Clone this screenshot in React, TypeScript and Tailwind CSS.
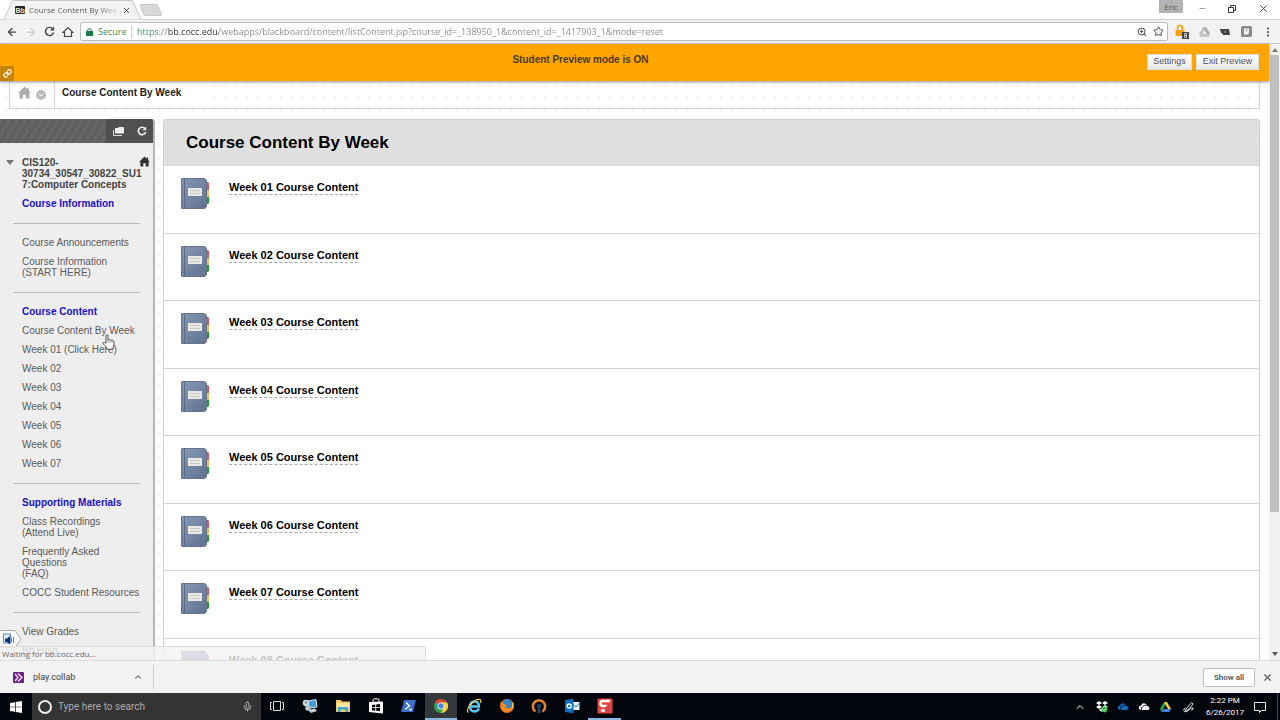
import { ReactNode } from 'react';
import {
  ArrowLeft, ArrowRight, ChevronDown, ChevronUp, Link, Mic, Minus,
  MoreVertical, Star, X, ZoomIn,
} from 'lucide-react';

const uiFont = "font-['Open_Sans','Noto_Sans',sans-serif]";

const weeks = ['01', '02', '03', '04', '05', '06', '07', '08'];

type MenuSection = { heading?: string; items: string[][] };

const menu: MenuSection[] = [
  { items: [['Course Announcements'], ['Course Information', '(START HERE)']] },
  {
    heading: 'Course Content',
    items: [
      ['Course Content By Week'], ['Week 01 (Click Here)'], ['Week 02'], ['Week 03'],
      ['Week 04'], ['Week 05'], ['Week 06'], ['Week 07'],
    ],
  },
  {
    heading: 'Supporting Materials',
    items: [
      ['Class Recordings', '(Attend Live)'],
      ['Frequently Asked', 'Questions', '(FAQ)'],
      ['COCC Student Resources'],
    ],
  },
  { items: [['View Grades'], ['Bb Help']] },
];

const House = ({ size, color }: { size: number; color: string }) => (
  <svg width={size} height={size} viewBox="0 0 12 12" className="shrink-0">
    <path d="M6 .5L8.500 3V1.500H10V4.500L12 6.500H10.500V11.500H7.300V8H4.700V11.500H1.500V6.500H0Z" fill={color} />
  </svg>
);

const ReloadIcon = ({ size, color, weight }: { size: number; color: string; weight: number }) => (
  <svg width={size} height={size} viewBox="0 0 12 12" className="shrink-0">
    <path d="M9.500 3A4.500 4.500 0 1 0 10.500 7" fill="none" stroke={color} strokeWidth={weight} />
    <path d="M11 .5V5H6.500Z" fill={color} />
  </svg>
);

const TabStrip = () => (
  <div className="relative flex h-5 shrink-0 items-start justify-between border-b border-[#d0d0d0] bg-white">
    <div className="flex">
      <div className="relative ml-1 flex h-5 w-[137px] items-center pl-[11px]">
        <svg className="absolute inset-0" width="137" height="20" viewBox="0 0 137 20">
          <path d="M0 19.500 L8 1.500 Q9 .5 10 .5 H127 Q128.500 .5 129 2 L137 19.500" fill="#f2f2f2" stroke="#c4c4c4" />
        </svg>
        <svg className="relative" width="10" height="8" viewBox="0 0 10 8">
          <rect width="10" height="8" rx="1" fill="#222" />
          <text x="0.5" y="6.500" fontSize="7" fontWeight="700" fill="#f3edc4" fontFamily="Liberation Sans, sans-serif">Bb</text>
        </svg>
        <span className="relative ml-1 w-[88px] whitespace-nowrap bg-gradient-to-r from-[#555] from-80% to-[#ddd] bg-clip-text text-[8px] text-transparent">
          Course Content By Week
        </span>
        <button aria-label="Close tab" className="relative ml-[5px]"><X size={9} strokeWidth={2.500} color="#444" /></button>
      </div>
      <button aria-label="New tab" className="-ml-0.5 mt-1 self-start">
        <svg width="24" height="12" viewBox="0 0 24 12">
          <path d="M1 1 Q1 .5 2 .5 H17 Q18.500 .5 19 2 L22.500 10 Q22.500 11.500 21 11.500 H7 Q5 11.500 4.500 10 Z" fill="#d8d8d8" stroke="#c8c8c8" />
        </svg>
      </button>
    </div>
    <div className="flex items-center pr-[11px]">
      <button className="mr-[15px] h-[13px] w-6 self-start bg-[#b3b3b3] text-[8px] leading-[12px] text-[#555]">Eric</button>
      <button aria-label="Minimize" className="mr-[20px] mt-[3px]"><Minus size={9} color="#888" /></button>
      <button aria-label="Restore" className="mr-[21px] mt-[3px]">
        <svg width="10" height="10" viewBox="0 0 10 10" fill="none" stroke="#333">
          <path d="M1.500 3.500 H6.500 V8.500 H1.500 Z M3.500 3 V1.500 H8.500 V6.500 H7" />
        </svg>
      </button>
      <button aria-label="Close" className="mt-[3px]"><X size={11} strokeWidth={2} color="#333" /></button>
    </div>
  </div>
);

const Toolbar = () => (
  <div className="flex h-6 shrink-0 items-center border-b border-[#c9c9c9] bg-[#f2f2f2] pl-1.5 pr-1.5">
    <div className="flex w-[74px] shrink-0 items-center gap-[7px] text-[#444]">
      <button aria-label="Back"><ArrowLeft size={12} strokeWidth={2.500} /></button>
      <button aria-label="Forward"><ArrowRight size={12} strokeWidth={2.500} color="#ccc" /></button>
      <button aria-label="Reload"><ReloadIcon size={11} color="#444" weight={1.5} /></button>
      <button aria-label="Home">
        <svg width="12" height="12" viewBox="0 0 12 12"><path d="M1 6.500L6 1.500L11 6.500H9.500V10.500H2.500V6.500Z" fill="none" stroke="#444" strokeWidth="1.200" /></svg>
      </button>
    </div>
    <div className="flex h-[19px] min-w-0 flex-1 items-center rounded-[2px] border border-[#bdbdbd] bg-white pl-[5px] pr-[3px]">
      <svg width="7" height="8" viewBox="0 0 7 8"><rect y="3" width="7" height="5" rx=".5" fill="#1a7a43" /><path d="M1.700 3.500V2.200Q1.700 .8 3.500 .8T5.300 2.200V3.500" fill="none" stroke="#1a7a43" /></svg>
      <label htmlFor="url" className="ml-[5px] w-[34px] border-r border-[#ccc] text-[9px] leading-[12px] text-[#3d9159]">Secure</label>
      <input
        id="url"
        className="ml-[5px] min-w-0 flex-1 bg-[linear-gradient(to_right,#3d9159_0_23px,#888_23px_31px,#333_31px_82px,#888_82px)] bg-clip-text text-[9px] text-transparent outline-none"
        defaultValue="https://bb.cocc.edu/webapps/blackboard/content/listContent.jsp?course_id=_138950_1&content_id=_1417903_1&mode=reset"
      />
      <button aria-label="Zoom"><ZoomIn size={10} strokeWidth={2.500} color="#555" /></button>
      <button aria-label="Bookmark" className="ml-[6px]"><Star size={11} color="#444" /></button>
    </div>
    <div className="ml-1.5 flex shrink-0 items-center gap-[10px]">
      <button aria-label="Password manager">
        <svg width="15" height="15" viewBox="0 0 15 15">
          <path d="M3.500 6 V4 Q3.500 1.500 6 1.500 T8.500 4 V6" fill="none" stroke="#f0a010" strokeWidth="1.600" />
          <rect x="1.500" y="6" width="9" height="6" rx="1" fill="#f5a40d" />
          <rect x="8" y="8" width="7" height="7" fill="#444" />
          <path d="M10.500 9.500 h2 v4 h-2z M10.500 11.500h2" fill="none" stroke="#ddd" strokeWidth=".8" />
        </svg>
      </button>
      <button aria-label="Drive">
        <svg width="11" height="10" viewBox="0 0 11 10">
          <path d="M4 0 H7 L11 7 L9.500 10 H1.500 L0 7 Z" fill="#c4c4c4" />
          <path d="M5.500 3.500 L7.500 7 H3.500 Z" fill="#f2f2f2" />
          <path d="M7 0 L11 7 H8 L5 1Z" fill="#aaa" />
        </svg>
      </button>
      <button aria-label="Extension">
        <svg width="11" height="8" viewBox="0 0 11 8"><path d="M0 1 H9 L10 7 H3 L2 5 H1 Z" fill="#444" /><path d="M5 2.500V5" stroke="#999" /></svg>
      </button>
      <button aria-label="Capture">
        <svg width="11" height="11" viewBox="0 0 11 11"><rect width="11" height="11" rx="1.500" fill="#8b8b8b" /><path d="M3 2.500H8V7L6.500 8.500H3Z" fill="#f4f4f4" /><circle cx="5.500" cy="4.500" r="1" fill="#aaa" /></svg>
      </button>
      <button aria-label="Menu"><MoreVertical size={12} strokeWidth={2.500} color="#555" /></button>
    </div>
  </div>
);

const Book = () => (
  <svg width="30" height="33" viewBox="0 0 30 33" className="shrink-0">
    <defs>
      <linearGradient id="cover" x1="0" y1="0" x2="1" y2="1">
        <stop offset="0" stopColor="#8798b4" />
        <stop offset="1" stopColor="#5f7290" />
      </linearGradient>
    </defs>
    <path d="M24 5 H28 L29 6 V13 H24Z" fill="#dc5560" />
    <path d="M24 13 H29 V20 H24Z" fill="#efc04a" />
    <path d="M24 20 H29 V26 L28 27 H24Z" fill="#1f9c2d" />
    <path d="M2 1.500 H24 Q26.500 2 26.500 4 V29 Q26.500 31 24 31.500 H2 Q1.500 31.500 1.500 31 V2 Q1.500 1.500 2 1.500Z" fill="url(#cover)" stroke="#65748c" />
    <path d="M4.500 2 V31" stroke="#5b6b85" />
    <rect x="8" y="11" width="14" height="8" fill="#e8e8e4" />
    <path d="M10 13.500 H20 M10 16.500 H20" stroke="#c8c8c4" />
  </svg>
);

const ContentRow = ({ week }: { week: string }) => (
  <li className="flex items-start border-b border-[#d3d3d3] pl-4 pt-[11px] odd:h-[68px] even:h-[67px]">
    <Book />
    <a href="#" className="ml-[19px] mt-[3px] border-b border-dashed border-[#aaa] text-[11px] font-bold leading-[14px] text-black">
      Week {week} Course Content
    </a>
  </li>
);

const Sidebar = () => (
  <aside className="w-[155px] shrink-0 overflow-hidden rounded-tr-[3px] border-r-2 border-[#b5b5b5] bg-[#eee]">
    <div className="flex h-6 items-center bg-[#505050]">
      <div className="h-full w-[106px] bg-[repeating-linear-gradient(120deg,#656565_0_3px,#5f5f5f_3px_7px)]" />
      <button aria-label="Display folder view" className="ml-[7px]">
        <svg width="11" height="9" viewBox="0 0 11 9"><path d="M2 1H5L6 0H10.500L11 1V6.500H2Z" fill="#eee" /><path d="M.5 3V8.500H9" fill="none" stroke="#ddd" /></svg>
      </button>
      <button aria-label="Refresh" className="ml-[13px]"><ReloadIcon size={10} color="#eee" weight={2} /></button>
    </div>
    <div className="pl-[22px] pr-[3px] pt-[14px] text-[10px] leading-[11px] text-[#5a5a5a]">
      <div className="relative font-bold text-[#444]">
        <svg className="absolute -left-4 top-[3px]" width="8" height="5"><path d="M0 0H8L4 5Z" fill="#777" /></svg>
        <a href="#">CIS120-<br />30734_30547_30822_SU1<br />7:Computer Concepts</a>
        <span className="absolute -top-px right-0"><House size={11} color="#333" /></span>
      </div>
      <h3 className="mt-2 font-bold text-[#1a0fc8]">Course Information</h3>
      {menu.map((section, i) => (
        <section key={i}>
          <hr className="-ml-[9px] mb-[13px] mr-[10px] mt-[14px] border-[#bbb]" />
          {section.heading && <h3 className="mb-2 font-bold text-[#1a0fc8]">{section.heading}</h3>}
          <ul className="flex flex-col gap-2">
            {section.items.map((lines) => (
              <li key={lines[0]}>
                <a href="#">{lines.map((line) => <span key={line} className="block whitespace-nowrap">{line}</span>)}</a>
              </li>
            ))}
          </ul>
        </section>
      ))}
    </div>
  </aside>
);

const PreviewBar = () => (
  <div className="relative z-10 flex h-[37px] shrink-0 items-center bg-[#ffa500] shadow-[0_1px_3px_#888]">
    <button aria-label="Link" className="flex h-[15px] w-[14px] items-center justify-center self-end bg-[#c98406]">
      <Link size={9} strokeWidth={3} color="#fff" />
    </button>
    <p className="flex-1 pb-[6px] text-center text-[10px] font-bold text-[#4a3a1a]">Student Preview mode is ON</p>
    <div className="mr-[10px] flex gap-1 pb-0.5 text-[9px] text-[#555]">
      <button className="h-4 w-[45px] border border-[#ddd] bg-gradient-to-b from-white to-[#e8e8e8] leading-[13px]">Settings</button>
      <button className="h-4 w-[63px] border border-[#ddd] bg-gradient-to-b from-white to-[#e8e8e8] leading-[13px]">Exit Preview</button>
    </div>
  </div>
);

const Page = () => (
  <div className="flex min-w-0 flex-1 flex-col bg-white bg-[radial-gradient(#f3f3f3_1px,transparent_2px)] bg-[size:11px_12px] font-['Liberation_Sans',Arial,sans-serif]">
    <PreviewBar />
    <nav className="ml-[9px] mr-[9px] flex h-7 shrink-0 items-center border border-t-0 border-[#d5d5d5] text-[10px] font-bold text-[#222]">
      <div className="flex h-full w-[45px] items-center gap-[5px] border-r border-[#d5d5d5] bg-white pb-1 pl-2">
        <House size={13} color="#aaa" />
        <span className="mt-1 flex size-[10px] items-center justify-center rounded-full bg-[#bbb]"><ChevronDown size={8} strokeWidth={3} color="#fff" /></span>
      </div>
      <a href="#" className="bg-white pb-1 pl-[7px] pr-8">Course Content By Week</a>
    </nav>
    <div className="mt-[10px] flex min-h-0 flex-1 overflow-hidden pr-[9px]">
      <Sidebar />
      <main className="ml-2 min-w-0 flex-1 overflow-hidden rounded-t-[3px] border border-b-0 border-[#d0d0d0] bg-white">
        <h1 className="flex h-[46px] items-center bg-[#dfdfdf] pl-[22px] text-[17px] font-bold text-black">Course Content By Week</h1>
        <ul>{weeks.map((week) => <ContentRow key={week} week={week} />)}</ul>
      </main>
    </div>
  </div>
);

const Scrollbar = () => (
  <div className="flex w-[11px] shrink-0 flex-col items-center bg-[#f1f1f1] py-1">
    <svg width="6" height="4"><path d="M0 4L3 0L6 4Z" fill="#777" /></svg>
    <div className="my-[3px] flex w-full flex-1 flex-col px-px"><div className="h-[77%] bg-[#c1c1c1]" /></div>
    <svg width="6" height="4"><path d="M0 0L3 4L6 0Z" fill="#555" /></svg>
  </div>
);

const HandCursor = () => (
  <svg className="absolute left-[102px] top-[290px] z-20" width="13" height="16" viewBox="0 0 13 16">
    <path d="M4 9.500 V2 Q4 .8 5 .8 T6 2 V6 L7.500 5.500 L9 6.300 L10.500 6.300 L12 7.500 V11 L10.500 15.200 H5 L3.500 12 L.8 9.500 Q.8 8 2.500 8.500 Z" fill="#fff" stroke="#444" strokeWidth=".9" />
    <path d="M6 6V9M8 6.500V9M10 7V9" stroke="#777" strokeWidth=".7" />
  </svg>
);

const DownloadBar = () => (
  <div className="flex h-[33px] shrink-0 items-center justify-between border-t border-[#ddd] bg-[#f2f2f2] pr-[7px] font-[Roboto,sans-serif] text-[9px]">
    <button className="flex h-6 w-[154px] items-center border-r border-[#ccc] pl-[13px] text-[#444]">
      <svg width="11" height="11" viewBox="0 0 11 11">
        <rect width="11" height="11" rx="1" fill="#6b2382" />
        <path d="M2 2L5 5.500L2 9M5 1.500L9 5.500L5 9.500" fill="none" stroke="#f0dff5" strokeWidth="1.400" />
      </svg>
      <span className="ml-[9px] flex-1 pt-0.5 text-left">play.collab</span>
      <ChevronUp size={10} strokeWidth={2.500} color="#555" className="mr-[10px]" />
    </button>
    <div className="flex items-center gap-[7px]">
      <button className="h-[19px] w-[52px] rounded-[2px] border border-[#c0c0c0] bg-white text-[8px] font-semibold leading-[15px] text-[#555]">Show all</button>
      <button aria-label="Close downloads"><X size={11} strokeWidth={2.500} color="#555" /></button>
    </div>
  </div>
);

const TaskIcon = ({ label, active, running, children }: { label: string; active?: boolean; running?: boolean; children: ReactNode }) => (
  <button
    aria-label={label}
    className={`flex h-full flex-1 items-center justify-center border-b-2 ${active ? 'bg-[#35383d]' : ''} ${active || running ? 'border-[#8ab9e0]' : 'border-transparent'}`}
  >
    <svg width="16" height="16" viewBox="0 0 16 16">{children}</svg>
  </button>
);

const Cloud = ({ color }: { color: string }) => (
  <svg width="12" height="9" viewBox="0 0 12 9">
    <path d="M1 7 Q0 4 3 3.500 Q4 .5 7 1.500 Q8.500 2 9 4 Q11 4 11.500 6 Q11.500 8 10 8 H4 Q2 8 1 7Z" fill={color} />
    <path d="M3.500 8 Q2.500 5 5 4.500 Q6 3 8 3.500" fill="none" stroke="#03050c" strokeWidth=".8" />
  </svg>
);

const Taskbar = () => (
  <footer className="flex h-[27px] shrink-0 items-center justify-between bg-[#03050c]">
    <div className="flex h-full items-center">
      <button aria-label="Start" className="flex w-8 justify-center">
        <svg width="12" height="12" viewBox="0 0 12 12" fill="#fff"><path d="M0 2L5 1.200V5.700H0ZM5.700 1.100L12 0V5.700H5.700ZM0 6.300H5V10.800L0 10ZM5.700 6.300H12V12L5.700 10.900Z" /></svg>
      </button>
      <div className="flex h-full w-[229px] items-center bg-[#343434] pl-1.5 pr-2">
        <span className="size-[14px] rounded-full border-2 border-[#eee]" />
        <input aria-label="Search" placeholder="Type here to search" className="ml-[6px] min-w-0 flex-1 font-[Roboto,sans-serif] text-[10px] outline-none placeholder:text-[#aaa]" />
        <Mic size={11} color="#bbb" />
      </div>
      <div className="flex h-full w-[360px]">
        <TaskIcon label="Task view"><path d="M4.500 3.500H11.500V12.500H4.500ZM3 4.500H1.500V11.500H3M13 4.500H14.500V11.500H13" fill="none" stroke="#ddd" /></TaskIcon>
        <TaskIcon label="Computer">
          <path d="M6 3L14 1.500L15 9L7 10Z" fill="#3d9be0" stroke="#d8e8f3" />
          <path d="M6 12L13 10.500L15 13L9 15Z" fill="#c9d2da" />
          <circle cx="4" cy="5" r="3.200" fill="#d5dde3" /><circle cx="4" cy="4.500" r="1.200" fill="#7f8f9c" />
          <circle cx="6" cy="10" r="2.800" fill="#b9c6cf" />
        </TaskIcon>
        <TaskIcon label="File Explorer">
          <path d="M1 2H6L7 3.500H15V14H1Z" fill="#f2c95c" /><path d="M2 5H14V10H2Z" fill="#fbe6a0" />
          <path d="M3 14V9H13V14H10.500V11.500H5.500V14Z" fill="#3ba7dc" />
        </TaskIcon>
        <TaskIcon label="Store">
          <path d="M5 4V2Q5 .8 6.500 .8H9.500Q11 .8 11 2V4" fill="none" stroke="#fff" />
          <path d="M1 4L15 3.500V15.500L1 14Z" fill="#fff" />
          <path d="M4 7L7.300 6.600V9.200H4ZM8.200 6.500L12 6V9.200H8.200ZM4 10H7.300V12.700L4 12.300ZM8.200 10H12V13.300L8.200 12.800Z" fill="#03050c" />
        </TaskIcon>
        <TaskIcon label="PowerShell">
          <path d="M4 2H16L13 14H1Z" fill="#3c6fc9" /><path d="M6 4.500L9.500 8L5 11.500M9 11.500H12" fill="none" stroke="#fff" strokeWidth="1.400" />
        </TaskIcon>
        <TaskIcon label="Chrome" active>
          <circle cx="8" cy="8" r="7" fill="#2fa150" />
          <path d="M8 8L1.900 4.500A7 7 0 0 1 14.100 4.500H8Z" fill="#df4436" />
          <path d="M8 4.500H14.100A7 7 0 0 1 8 15L11 9.700Z" fill="#fbce35" />
          <circle cx="8" cy="8" r="3.500" fill="#fff" /><circle cx="8" cy="8" r="2.700" fill="#4285e8" />
        </TaskIcon>
        <TaskIcon label="Internet Explorer">
          <path d="M13 10.500Q11.500 13.500 8.500 13.500Q4 13.500 4 8.500T8.500 3.500Q13 3.500 13 8.500H5" fill="none" stroke="#5cc6f2" strokeWidth="2.400" />
          <path d="M2.500 14.500Q0 13 4 7Q10 .5 14 1.500Q15.500 2 14.500 5" fill="none" stroke="#efcb4e" strokeWidth="1.200" />
        </TaskIcon>
        <TaskIcon label="Firefox">
          <circle cx="8" cy="8" r="7" fill="#e56a1c" /><circle cx="8.500" cy="6" r="5" fill="#3286c6" />
          <path d="M1.500 4Q4 4 5 6L8 7Q7 9 6 9Q9 12 13 8Q12 14 8 14.500Q1 14 1.500 4Z" fill="#f08a25" />
          <path d="M14 4Q16 9 12 13Q14 9 13 5Z" fill="#f8c33c" />
        </TaskIcon>
        <TaskIcon label="OpenVPN">
          <path d="M4.500 13.500A6.200 6.200 0 1 1 11.500 13.500" fill="none" stroke="#e8832b" strokeWidth="2.600" />
          <circle cx="8" cy="8" r="2.200" fill="#1d3f66" /><path d="M7 9H9L10 15H6Z" fill="#1d3f66" />
        </TaskIcon>
        <TaskIcon label="Outlook">
          <path d="M8 4H15.500V12H8Z" fill="#e9f2f9" /><path d="M8 6L12 9L15.500 5" fill="none" stroke="#1371bd" />
          <path d="M1 2L9.500 .8V15.200L1 14Z" fill="#0f6fc0" /><circle cx="5.200" cy="8" r="2" fill="none" stroke="#fff" strokeWidth="1.400" />
        </TaskIcon>
        <TaskIcon label="Snagit" running>
          <rect x=".5" y=".5" width="15" height="15" rx="1" fill="#e4483d" />
          <path d="M13 3H6Q3.500 3 3.500 5.500T6 8H8Q10 8 10 10T8 12.500H4" fill="none" stroke="#fff" strokeWidth="2.400" />
          <circle cx="11.500" cy="11.500" r="3.800" fill="#d8434a" />
        </TaskIcon>
      </div>
    </div>
    <div className="flex h-full items-center text-white">
      <ChevronUp size={12} />
      <svg className="ml-[10px]" width="12" height="12" viewBox="0 0 12 12">
        <path d="M3 0L6 2L3 4L0 2ZM9 0L12 2L9 4L6 2ZM3 4L6 6L3 8L0 6ZM9 4L12 6L9 8L6 6ZM3 9L6 7L9 9L6 11Z" fill="#fff" />
        <circle cx="8.500" cy="8.500" r="3" fill="#35b34a" /><path d="M7 8.500L8.200 9.700L10 7.500" fill="none" stroke="#fff" strokeWidth=".8" />
      </svg>
      <span className="ml-[9px]"><Cloud color="#1269bd" /></span>
      <span className="ml-[9px]"><Cloud color="#f2f2f2" /></span>
      <svg className="ml-[10px]" width="11" height="10" viewBox="0 0 11 10">
        <path d="M4 0L0 7L1.500 10L5.500 3Z" fill="#26a35a" /><path d="M4 0H7L11 7H8Z" fill="#fbcf3b" /><path d="M3.500 7H11L9.500 10H1.500Z" fill="#3f7de0" />
      </svg>
      <svg className="ml-[12px]" width="12" height="12" viewBox="0 0 12 12" fill="none" stroke="#ddd">
        <path d="M3 8L8.500 1.500L10 3L5 9L2.500 9.500ZM2.500 7Q.5 7.500 .8 9.500T4 10.500L7 8Q9 6 10 7T8 9.500" />
      </svg>
      <div className="ml-[11px] flex w-[38px] flex-col items-center whitespace-nowrap font-[Roboto,sans-serif] text-[8px] leading-[12px]">
        <span>2:22 PM</span>
        <span>6/26/2017</span>
      </div>
      <svg className="ml-[10px]" width="12" height="12" viewBox="0 0 12 12"><path d="M.5 1.500H11.500V9.500H7.500L5.500 11.500V9.500H.5Z" fill="none" stroke="#eee" /></svg>
      <div className="ml-[11px] mr-[2px] h-full w-px bg-[#444]" />
    </div>
  </footer>
);

export default function App() {
  return (
    <div className={`flex h-screen flex-col overflow-hidden ${uiFont}`}>
      <TabStrip />
      <Toolbar />
      <div className="relative flex min-h-0 flex-1">
        <Page />
        <Scrollbar />
        <HandCursor />
        <svg className="absolute bottom-3 left-0" width="22" height="18" viewBox="0 0 22 18">
          <path d="M0 .5H15L21 9L15 17.500H0" fill="#fafafa" stroke="#aaa" />
          <rect x="3.500" y="4" width="7" height="9" fill="#e3effa" stroke="#5590c9" />
          <path d="M5 8.500H7L10 6V14.500L7 12H5Z" fill="#14337c" /><path d="M11.500 8V12.500M13.500 7V13" stroke="#e06040" />
        </svg>
        <div className="absolute bottom-0 left-0 h-[14px] w-[426px] rounded-tr-[2px] border border-b-0 border-l-0 border-[#ddd] bg-[#f2f2f2]/80 pl-0.5 text-[8px] leading-[14px] text-[#666]">
          Waiting for bb.cocc.edu...
        </div>
      </div>
      <DownloadBar />
      <Taskbar />
    </div>
  );
}
